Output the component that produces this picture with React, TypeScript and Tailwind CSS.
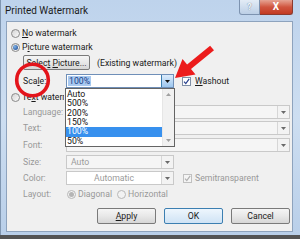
import React from "react";

const Radio = ({ checked = false, disabled = false }: { checked?: boolean; disabled?: boolean }) => (
  <span
    className={`shrink-0 w-[9px] h-[9px] rounded-full border flex items-center justify-center ${
      disabled ? "border-[#b8b8b8] bg-[#f2f2f2]" : "border-[#8a8a8a] bg-gradient-to-br from-[#d4d4d4] to-[#fbfbfb]"
    }`}
  >
    {checked && (
      <span
        className={`w-[5px] h-[5px] rounded-full ${
          disabled ? "bg-[#b5b5b5]" : "bg-[radial-gradient(circle_at_35%_35%,#7fb4ea,#163f86)]"
        }`}
      />
    )}
  </span>
);

const Check = ({ disabled = false }: { disabled?: boolean }) => (
  <span
    className={`shrink-0 w-[9px] h-[9px] border flex items-center justify-center ${
      disabled ? "border-[#c0c0c0] bg-[#f4f4f4]" : "border-[#7f8fa6] bg-white"
    }`}
  >
    <svg width="7" height="7" viewBox="0 0 7 7">
      <path
        d="M1 3.6 L2.8 5.6 L6.2 0.8"
        stroke={disabled ? "#b0b0b0" : "#263f8c"}
        strokeWidth="1.2"
        fill="none"
      />
    </svg>
  </span>
);

const Arrow = ({ color = "#444" }: { color?: string }) => (
  <svg width="5" height="3" viewBox="0 0 5 3">
    <path d="M0 0 H5 L2.5 3 Z" fill={color} />
  </svg>
);

const DisabledCombo = ({ w, text, center = false, white = false }: { w: string; text?: string; center?: boolean; white?: boolean }) => (
  <div className={`${w} h-[14px] border border-[#c9c9c9] ${white ? "bg-white" : "bg-[#f5f5f5]"} flex`}>
    <div className={`flex-1 flex items-center text-[#9a9a9a] ${center ? "justify-center" : "pl-[4px]"}`}>{text}</div>
    <div className="w-[12px] h-full border-l border-[#d6d6d6] bg-[#f3f3f3] flex items-center justify-center">
      <Arrow color="#6a6a6a" />
    </div>
  </div>
);

const Btn = ({ children, def = false, w = "w-[59px] h-[16px]" }: { children: React.ReactNode; def?: boolean; w?: string }) => (
  <div
    className={`${w} shrink-0 whitespace-nowrap rounded-[2px] border flex items-center justify-center text-[#1a1a1a] ${
      def
        ? "border-[#3c7fb1] bg-gradient-to-b from-[#eef6fd] to-[#cfe3f5]"
        : "border-[#7a7a7a] bg-gradient-to-b from-[#f5f5f5] via-[#e8e8e8] to-[#d6d6d6]"
    }`}
  >
    {children}
  </div>
);

export default function App() {
  return (
    <div className="w-[300px] h-[239px] relative overflow-hidden bg-[#545454] font-['Roboto','Noto_Sans',sans-serif] text-[8.7px] leading-[10px] whitespace-nowrap">
      <div className="h-[235px] bg-gradient-to-b from-[#bed3ec] via-[#cddef1] to-[#b9cfe9] flex flex-col border-l border-[#8096b0]">
        {/* title bar */}
        <div className="h-[21px] flex items-start shrink-0">
          <span className="pl-[4px] pt-[5px] text-[10px] leading-[12px] text-[#1c1c1c]">Printed Watermark</span>
          <div className="ml-auto mr-[7px] flex">
            <div className="w-[21px] h-[15px] rounded-bl-[3px] border border-t-0 border-[#7d93b0] bg-gradient-to-b from-[#e3ecf6] to-[#bccfe6] flex items-center justify-center text-[9px] font-bold text-[#f4f7fb] [text-shadow:0_0_1px_#4a5d78]">
              ?
            </div>
            <div className="w-[33px] h-[15px] rounded-br-[3px] border border-t-0 border-l-0 border-[#8c3a2e] bg-gradient-to-b from-[#e5a393] via-[#d0553f] to-[#c23a22] flex items-center justify-center text-[10px] font-bold text-white">
              X
            </div>
          </div>
        </div>

        {/* client */}
        <div className="ml-[5px] mr-[7px] h-[211px] shrink-0 bg-[#f0f0f0] border border-[#8ea3bd] flex flex-col text-[#1a1a1a]">
          <div className="mt-[4px] h-[14px] pl-[4px] flex items-center gap-[2px]">
            <Radio />
            <span>
              <span className="underline">N</span>o watermark
            </span>
          </div>
          <div className="h-[14px] pl-[4px] flex items-center gap-[2px]">
            <Radio checked />
            <span>
              P<span className="underline">i</span>cture watermark
            </span>
          </div>
          <div className="mt-[1px] h-[15px] pl-[16px] flex items-center">
            <Btn w="w-[67px] h-[15px]">
              <span>
                Selec<span className="underline">t</span> <span className="underline">P</span>icture...
              </span>
            </Btn>
            <span className="ml-[7px]">(Existing watermark)</span>
          </div>
          <div className="mt-[4px] h-[14px] pl-[16px] flex items-center">
            <span className="w-[43px]">
              Sca<span className="underline">l</span>e:
            </span>
            <div className="w-[108px] h-[14px] border border-[#6f8fb8] bg-white flex">
              <div className="flex-1 flex items-center pl-[1px]">
                <span className="bg-[#a9c9f0] text-[#173f86] px-[1px] leading-[10px]">100%</span>
              </div>
              <div className="w-[12px] h-full border-l border-[#3c7fb1] bg-gradient-to-b from-[#dcecfc] to-[#9cc6ee] flex items-center justify-center">
                <Arrow color="#111" />
              </div>
            </div>
            <span className="ml-[8px]">
              <Check />
            </span>
            <span className="ml-[4px]">
              <span className="underline">W</span>ashout
            </span>
          </div>
          <div className="mt-[2px] h-[14px] pl-[4px] flex items-center gap-[2px]">
            <Radio />
            <span className="w-[42px] overflow-hidden">
              Te<span className="underline">x</span>t watermark
            </span>
          </div>
          <div className="mt-[1px] h-[14px] pl-[16px] flex items-center text-[#999]">
            <span className="w-[43px]">Language:</span>
            <DisabledCombo w="w-[224px]" />
          </div>
          <div className="mt-[2px] h-[14px] pl-[16px] flex items-center text-[#999]">
            <span className="w-[43px]">Text:</span>
            <DisabledCombo w="w-[224px]" />
          </div>
          <div className="mt-[3px] h-[14px] pl-[16px] flex items-center text-[#999]">
            <span className="w-[43px]">Font:</span>
            <DisabledCombo w="w-[224px]" />
          </div>
          <div className="mt-[3px] h-[14px] pl-[16px] flex items-center text-[#999]">
            <span className="w-[43px]">Size:</span>
            <DisabledCombo w="w-[108px]" text="Auto" />
          </div>
          <div className="mt-[2px] h-[14px] pl-[16px] flex items-center text-[#999]">
            <span className="w-[43px]">Color:</span>
            <DisabledCombo w="w-[108px]" text="Automatic" center white />
            <span className="ml-[9px]">
              <Check disabled />
            </span>
            <span className="ml-[3px]">Semitransparent</span>
          </div>
          <div className="mt-[2px] h-[14px] pl-[16px] flex items-center text-[#999]">
            <span className="w-[44px]">Layout:</span>
            <div className="w-[50px] flex items-center gap-[2px]">
              <Radio checked disabled />
              <span>Diagonal</span>
            </div>
            <div className="flex items-center gap-[2px]">
              <Radio disabled />
              <span>Horizontal</span>
            </div>
          </div>
          <div className="mt-[7px] h-[16px] pr-[2px] flex justify-end gap-[8px]">
            <Btn>
              <span>
                <span className="underline">A</span>pply
              </span>
            </Btn>
            <Btn def>OK</Btn>
            <Btn>Cancel</Btn>
          </div>
        </div>
      </div>

      {/* dropdown list overlay */}
      <div className="absolute left-[65px] top-[88px] w-[110px] h-[59px] border border-[#646464] bg-white flex text-[#111] z-10">
        <div className="flex-1 flex flex-col pt-[1px]">
          {["Auto", "500%", "200%", "150%", "100%", "50%"].map((t) => (
            <div
              key={t}
              className={`h-[9.5px] leading-[9px] flex items-center pl-[1px] ${t === "100%" ? "bg-[#3790ee] text-white" : ""}`}
            >
              {t}
            </div>
          ))}
        </div>
        <div className="w-[12px] h-full bg-[#f1f1f1] border-l border-[#e6e6e6] flex flex-col items-center justify-between py-[4px]">
          <svg width="5" height="3" viewBox="0 0 5 3">
            <path d="M0 3 H5 L2.5 0 Z" fill="#a0a0a0" />
          </svg>
          <Arrow color="#a0a0a0" />
        </div>
      </div>

      {/* red annotation circle and arrow */}
      <svg className="absolute left-0 top-0 z-20" width="300" height="239" viewBox="0 0 300 239">
        <circle cx="32.5" cy="80" r="15.8" fill="none" stroke="#e3141b" strokeWidth="3.6" />
        <polygon
          points="175,78 195.5,74.5 191,69 214,50.3 210.1,45.7 187.1,64.4 182.5,59"
          fill="#ec1c1c"
        />
      </svg>
    </div>
  );
}
